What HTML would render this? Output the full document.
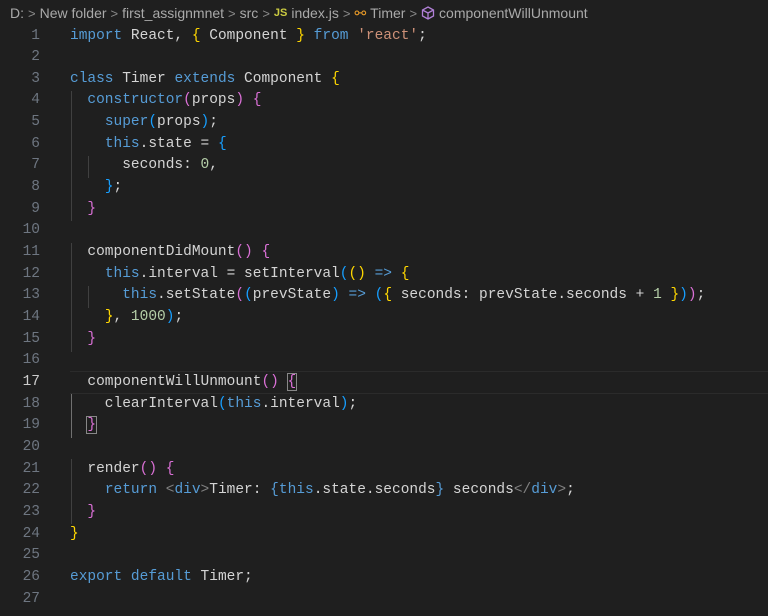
<!DOCTYPE html>
<html><head><style>
body{margin:0;width:768px;height:604px;background:#1f1f1f;overflow:hidden;font-family:"Liberation Mono",monospace;}
.bc{position:absolute;top:3px;left:10px;height:20px;font:14px "Liberation Sans",sans-serif;color:#a9a9a9;white-space:nowrap;display:flex;align-items:center;gap:4px}
.bc .s{color:#8a8a8a;font-size:13px}
.code{position:absolute;top:25.5px;left:0;width:768px;height:590px;font-size:14.5px;line-height:21.65px;color:#d4d4d4;white-space:pre}
.ln{position:absolute;top:0;left:0;width:40px;text-align:right;color:#6e7681}
.t{position:absolute;top:0;left:70px}
.k{color:#569cd6}.s1{color:#ce9178}.n{color:#b5cea8}
.y{color:#ffd700}.p{color:#da70d6}.b{color:#179fff}
.cur{position:absolute;left:70px;right:0;top:371px;height:21px;border-top:1px solid #2b2b2b;border-bottom:1px solid #2b2b2b}
.g{position:absolute;width:1px;background:#404040}
.box{outline:1px solid #888}
</style></head><body>
<div class="bc">D: <span class="s">&gt;</span> New folder <span class="s">&gt;</span> first_assignmnet <span class="s">&gt;</span> src <span class="s">&gt;</span> <span style="color:#cbcb41;font-weight:bold;font-size:11px">JS</span> index.js <span class="s">&gt;</span> <span style="color:#ee9d28">⚯</span> Timer <span class="s">&gt;</span> <svg width="14" height="14" viewBox="0 0 14 14"><path d="M7 1L12.5 4V10L7 13L1.5 10V4Z M1.5 4L7 7L12.5 4 M7 7V13" fill="none" stroke="#b180d7" stroke-width="1.3"/></svg> componentWillUnmount</div>
<div class="cur"></div>
<div class="g" style="left:71px;top:91px;height:130px"></div>
<div class="g" style="left:71px;top:243px;height:109px"></div>
<div class="g" style="left:71px;top:394px;height:44px;background:#707070"></div>
<div class="g" style="left:71px;top:459px;height:65px"></div>
<div class="g" style="left:88px;top:156px;height:22px"></div>
<div class="g" style="left:88px;top:286px;height:22px"></div>
<div class="code"><div class="ln">1
2
3
4
5
6
7
8
9
10
11
12
13
14
15
16
<span style="color:#ccc">17</span>
18
19
20
21
22
23
24
25
26
27</div><div class="t"><span class="k">import</span> React, <span class="y">{</span> Component <span class="y">}</span> <span class="k">from</span> <span class="s1">'react'</span>;

<span class="k">class</span> Timer <span class="k">extends</span> Component <span class="y">{</span>
  <span class="k">constructor</span><span class="p">(</span>props<span class="p">)</span> <span class="p">{</span>
    <span class="k">super</span><span class="b">(</span>props<span class="b">)</span>;
    <span class="k">this</span>.state = <span class="b">{</span>
      seconds: <span class="n">0</span>,
    <span class="b">}</span>;
  <span class="p">}</span>

  componentDidMount<span class="p">()</span> <span class="p">{</span>
    <span class="k">this</span>.interval = setInterval<span class="b">(</span><span class="y">()</span> <span class="k">=&gt;</span> <span class="y">{</span>
      <span class="k">this</span>.setState<span class="p">(</span><span class="b">(</span>prevState<span class="b">)</span> <span class="k">=&gt;</span> <span class="b">(</span><span class="y">{</span> seconds: prevState.seconds + <span class="n">1</span> <span class="y">}</span><span class="b">)</span><span class="p">)</span>;
    <span class="y">}</span>, <span class="n">1000</span><span class="b">)</span>;
  <span class="p">}</span>

  componentWillUnmount<span class="p">()</span> <span class="p box">{</span>
    clearInterval<span class="b">(</span><span class="k">this</span>.interval<span class="b">)</span>;
  <span class="p box">}</span>

  render<span class="p">()</span> <span class="p">{</span>
    <span class="k">return</span> <span style="color:#808080">&lt;</span><span class="k">div</span><span style="color:#808080">&gt;</span>Timer: <span class="k">{this</span>.state.seconds<span class="k">}</span> seconds<span style="color:#808080">&lt;/</span><span class="k">div</span><span style="color:#808080">&gt;</span>;
  <span class="p">}</span>
<span class="y">}</span>

<span class="k">export</span> <span class="k">default</span> Timer;</div></div>
</body></html>
